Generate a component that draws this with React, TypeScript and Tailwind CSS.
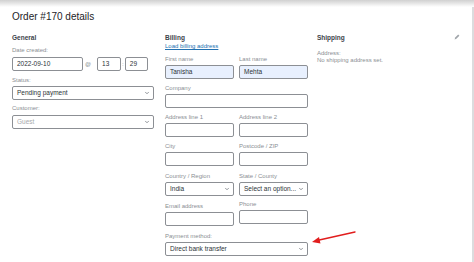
import { ChevronDown } from "lucide-react";

const font = { fontFamily: '"Liberation Sans", Arial, sans-serif' };

const Label = ({ children, className = "" }: { children: React.ReactNode; className?: string }) => (
  <div className={`text-[6px] leading-[7px] text-[#8a8f94] ${className}`}>{children}</div>
);

const Box = ({
  children,
  className = "",
  select = false,
  filled = false,
}: {
  children?: React.ReactNode;
  className?: string;
  select?: boolean;
  filled?: boolean;
}) => (
  <div
    className={`flex h-[14px] items-center justify-between rounded-[2px] border border-[#8c8f94] pl-[4px] pr-[3px] text-[6.5px] text-[#2c3338] ${
      filled ? "bg-[#e8f0fe]" : "bg-white"
    } ${className}`}
  >
    <span className="whitespace-nowrap">{children}</span>
    {select && <ChevronDown className="h-[6px] w-[6px] shrink-0 text-[#50575e]" strokeWidth={2.5} />}
  </div>
);

const Pair = ({
  a,
  b,
  children,
  className = "",
}: {
  a: string;
  b: string;
  children: React.ReactNode;
  className?: string;
}) => (
  <div className={className}>
    <div className="grid grid-cols-2 gap-[5px]">
      <Label>{a}</Label>
      <Label>{b}</Label>
    </div>
    <div className="mt-[2px] grid grid-cols-2 gap-[5px]">{children}</div>
  </div>
);

export default function App() {
  return (
    <div className="relative h-[262px] w-[474px] overflow-hidden bg-white" style={font}>
      <div className="h-[7px] bg-gradient-to-b from-[#d0d0d0] to-white" />
      <div className="flex h-[255px] border-r-2 border-[#dcdcde] pl-[12px] pr-[8px]">
        <div className="w-full">
          <h1 className="mt-[3px] text-[10px] leading-[14px] text-[#1d2327]">Order #170 details</h1>

          <div className="mt-[10px] flex">
            {/* General */}
            <div className="w-[142px]">
              <h3 className="text-[6.5px] font-bold leading-[8px] text-[#3c434a]">General</h3>
              <Label className="mt-[5px]">Date created:</Label>
              <div className="mt-[3px] flex items-center">
                <Box className="w-[71px]">2022-09-10</Box>
                <span className="mx-[2px] text-[6px] text-[#8a8f94]">@</span>
                <Box className="ml-[4px] w-[24px]">13</Box>
                <span className="mx-[1px] text-[6px] text-[#8a8f94]">:</span>
                <Box className="w-[23px]">29</Box>
              </div>
              <Label className="mt-[6px]">Status:</Label>
              <Box select className="mt-[2px]">
                Pending payment
              </Box>
              <Label className="mt-[5px]">Customer:</Label>
              <Box select className="mt-[3px] !text-[#a7aaad]">
                Guest
              </Box>
            </div>

            {/* Billing */}
            <div className="ml-[11px] w-[143px]">
              <h3 className="text-[6.5px] font-bold leading-[8px] text-[#3c434a]">Billing</h3>
              <div className="mt-[1px] text-[6px] leading-[7px] text-[#2271b1] underline">Load billing address</div>

              <Pair a="First name" b="Last name" className="mt-[6px]">
                <Box filled>Tanisha</Box>
                <Box filled>Mehta</Box>
              </Pair>

              <Label className="mt-[6px]">Company</Label>
              <Box className="mt-[2px]" />

              <Pair a="Address line 1" b="Address line 2" className="mt-[6px]">
                <Box />
                <Box />
              </Pair>

              <Pair a="City" b="Postcode / ZIP" className="mt-[6px]">
                <Box />
                <Box />
              </Pair>

              <Pair a="Country / Region" b="State / County" className="mt-[7px]">
                <Box select>India</Box>
                <Box select>Select an option...</Box>
              </Pair>

              <div className="mt-[5px] grid grid-cols-2 gap-[5px]">
                <div className="pt-[2px]">
                  <Label>Email address</Label>
                  <Box className="mt-[2px]" />
                </div>
                <div>
                  <Label>Phone</Label>
                  <Box className="mt-[2px]" />
                </div>
              </div>

              <Label className="mt-[7px]">Payment method:</Label>
              <Box select className="mt-[2px]">
                Direct bank transfer
              </Box>
            </div>

            {/* Shipping */}
            <div className="ml-[9px] flex-1">
              <div className="flex items-start justify-between">
                <h3 className="text-[6.5px] font-bold leading-[8px] text-[#3c434a]">Shipping</h3>
                <svg viewBox="0 0 10 10" className="mr-[4px] h-[6px] w-[6px] text-[#a0a5aa]">
                  <path d="M1 9 L2 6 L7 1 L9 3 L4 8 Z" fill="currentColor" />
                </svg>
              </div>
              <div className="mt-[8px] text-[6px] leading-[7px] text-[#8a8f94]">Address:</div>
              <div className="text-[6px] leading-[7px] text-[#8a8f94]">No shipping address set.</div>
            </div>
          </div>
        </div>
      </div>

      {/* annotation arrow */}
      <svg className="absolute left-[308px] top-[228px] h-[18px] w-[52px]" viewBox="0 0 52 18">
        <line x1="47" y1="4" x2="9" y2="12.5" stroke="#e11d1d" strokeWidth="1.4" strokeLinecap="round" />
        <path d="M4 14 L11 9 L12.5 15.5 Z" fill="#e11d1d" />
      </svg>
    </div>
  );
}
